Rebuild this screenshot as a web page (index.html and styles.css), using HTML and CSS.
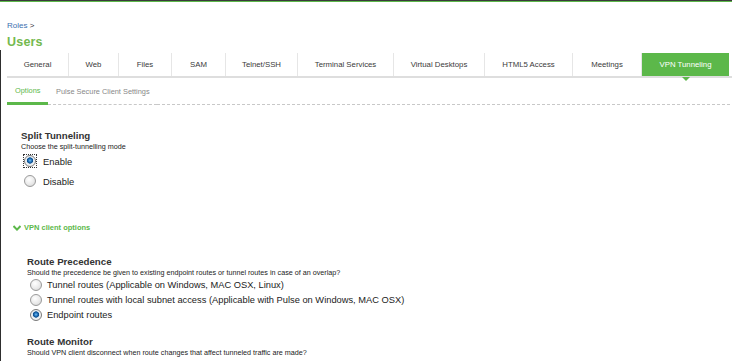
FILE: index.html
```html
<!DOCTYPE html>
<html>
<head>
<meta charset="utf-8">
<link rel="stylesheet" href="styles.css">
</head>
<body>
<div class="topbar"></div>
<div class="head">
  <div class="crumb"><a class="crumb-link">Roles</a> &gt;</div>
  <h1 class="title">Users</h1>
</div>
<div class="main">
  <div class="tabs">
    <div class="tab w62">General</div>
    <div class="tab w50">Web</div>
    <div class="tab w53">Files</div>
    <div class="tab w54">SAM</div>
    <div class="tab w72">Telnet/SSH</div>
    <div class="tab w96">Terminal Services</div>
    <div class="tab w91">Virtual Desktops</div>
    <div class="tab w88">HTML5 Access</div>
    <div class="tab w69">Meetings</div>
    <div class="tab w87 active">VPN Tunneling</div>
  </div>
  <div class="subtabs">
    <div class="subtab current">Options</div>
    <div class="subtab">Pulse Secure Client Settings</div>
    <div class="dash"></div>
  </div>

  <div class="section split">
    <div class="sec-title">Split Tunneling</div>
    <div class="sec-desc">Choose the split-tunnelling mode</div>
    <label class="opt"><span class="focus"><span class="radio on"></span></span><span class="opt-text">Enable</span></label>
    <label class="opt"><span class="nofocus"><span class="radio"></span></span><span class="opt-text">Disable</span></label>
  </div>

  <div class="toggle">
    <svg class="chev" width="8" height="6" viewBox="0 0 8 6"><path d="M0.5 1 L4 4.6 L7.5 1" fill="none" stroke="#5cb84a" stroke-width="2"/></svg>
    <span>VPN client options</span>
  </div>

  <div class="section route">
    <div class="sec-title">Route Precedence</div>
    <div class="sec-desc">Should the precedence be given to existing endpoint routes or tunnel routes in case of an overlap?</div>
    <label class="opt2"><span class="radio"></span><span class="opt-text">Tunnel routes (Applicable on Windows, MAC OSX, Linux)</span></label>
    <label class="opt2"><span class="radio"></span><span class="opt-text">Tunnel routes with local subnet access (Applicable with Pulse on Windows, MAC OSX)</span></label>
    <label class="opt2"><span class="radio on"></span><span class="opt-text">Endpoint routes</span></label>
    <div class="sec-title mon">Route Monitor</div>
    <div class="sec-desc">Should VPN client disconnect when route changes that affect tunneled traffic are made?</div>
  </div>
</div>
</body>
</html>
```
FILE: styles.css
```css
html, body {
  margin: 0;
  padding: 0;
  background: #fff;
  font-family: "Liberation Sans", Arial, sans-serif;
  color: #333;
  overflow: hidden;
}
.topbar {
  height: 1px;
  background: #3a3a3a;
  border-bottom: 1px solid #5cb84a;
}
.head {
  padding: 19px 0 0 7px;
  height: 29px;
}
.crumb {
  font-size: 8px;
  line-height: 10px;
  color: #333;
}
.crumb-link {
  color: #3c6fb0;
}
.title {
  margin: 4px 0 0;
  font-size: 12.5px;
  line-height: 14px;
  font-weight: bold;
  color: #74b94e;
  letter-spacing: 0.2px;
}
.main {
  border-left: 1px solid #2e2e2e;
  min-height: 320px;
  padding: 3px 0 0 6px;
}
.tabs {
  display: flex;
  height: 23px;
  border-bottom: 2px solid #dedede;
}
.tab {
  box-sizing: border-box;
  display: flex;
  align-items: center;
  justify-content: center;
  font-size: 7.8px;
  color: #3a3a3a;
  border-right: 1px solid #e6e6e6;
  position: relative;
}
.tab.active {
  background: #5cb84a;
  color: #fff;
  border-right: none;
}
.tab.active::after {
  content: "";
  position: absolute;
  left: 50%;
  bottom: -5px;
  margin-left: -4px;
  border-left: 4px solid transparent;
  border-right: 4px solid transparent;
  border-top: 4px solid #5cb84a;
}
.w62 { width: 62px; }
.w50 { width: 50px; }
.w53 { width: 53px; }
.w54 { width: 54px; }
.w72 { width: 72px; }
.w96 { width: 96px; }
.w91 { width: 91px; }
.w88 { width: 88px; }
.w69 { width: 69px; }
.w87 { width: 87px; border-right: none; }

.subtabs {
  display: flex;
  align-items: flex-end;
  margin-top: 8px;
  height: 19px;
}
.subtab {
  font-size: 7.4px;
  color: #888;
  padding: 0 7px 4px 8px;
  height: 15px;
  line-height: 13px;
  box-sizing: content-box;
  border-bottom: 1px dashed #c8c8c8;
}
.subtab.current {
  color: #5cb84a;
  padding: 0 7px 4px 8px;
  border-bottom: 3px solid #5cb84a;
  height: 13px;
  line-height: 11px;
  width: 26px;
}
.dash {
  flex: 1;
  border-bottom: 1px dashed #c8c8c8;
  margin-right: 2px;
}
.section.split {
  padding: 25px 0 0 14px;
}
.sec-title {
  font-size: 9.7px;
  line-height: 12px;
  font-weight: bold;
  color: #333;
}
.sec-desc {
  font-size: 7.2px;
  line-height: 9px;
  color: #222;
}
.opt {
  display: flex;
  align-items: center;
  height: 20px;
}
.focus, .nofocus {
  display: inline-flex;
  align-items: center;
  justify-content: center;
  width: 14px;
  height: 14px;
  box-sizing: border-box;
  margin-left: 2px;
}
.focus {
  border: 1px dotted #333;
}
.radio {
  display: inline-block;
  width: 12px;
  height: 12px;
  border-radius: 50%;
  box-sizing: border-box;
  border: 1px solid #9a9a9a;
  background: radial-gradient(circle at 40% 35%, #ffffff 0%, #eaeaea 55%, #cfcfcf 100%);
  flex: none;
}
.radio.on {
  border-color: #7a7a7a;
  background: radial-gradient(circle at 50% 45%, #7fc3f0 0%, #2a7fc8 18%, #0b4a8a 38%, #dde8f0 46%, #f4f4f4 62%, #cfcfcf 100%);
}
.opt-text {
  font-size: 9.4px;
  color: #222;
}
.opt .opt-text {
  margin-left: 6px;
}
.toggle {
  display: flex;
  align-items: center;
  margin: 32px 0 0 6px;
  font-size: 7.5px;
  font-weight: bold;
  color: #5cb84a;
}
.chev {
  margin-right: 3px;
}
.section.route {
  padding: 24px 0 0 20px;
}
.opt2 {
  display: flex;
  align-items: center;
  height: 15.4px;
  padding-left: 3px;
}
.opt2 .opt-text {
  font-size: 9.3px;
  margin-left: 5px;
}
.sec-title.mon {
  margin-top: 13px;
}
```
